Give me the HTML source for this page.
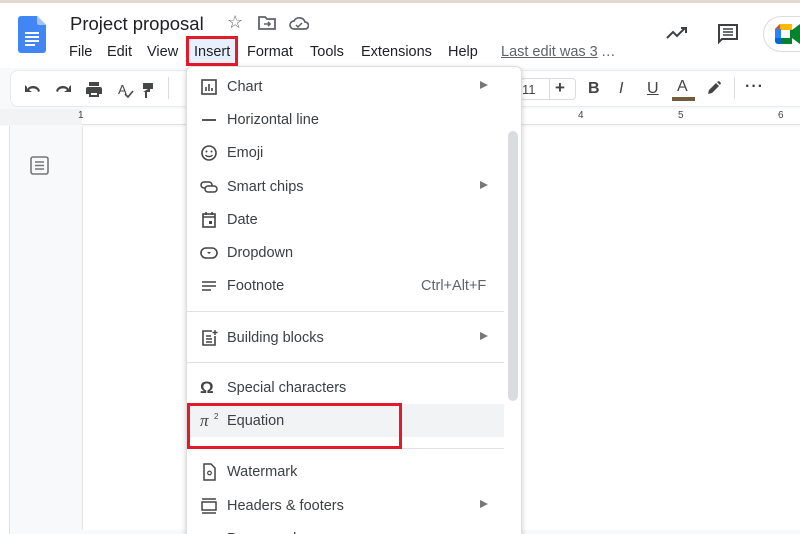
<!DOCTYPE html>
<html><head><meta charset="utf-8"><style>
*{margin:0;padding:0;box-sizing:border-box}
html,body{width:800px;height:534px;overflow:hidden}
body{background:#f8f9fa;font-family:"Liberation Sans",Arial,sans-serif;position:relative;color:#3c4043}
.a{position:absolute}
.mi{position:absolute;left:187px;width:317px;height:33px;font-size:14.5px;color:#3c4043}
.mi .t{position:absolute;left:40px;top:9px}
.mi .ic{position:absolute;left:13px;top:8px;width:18px;height:18px}
.mi .ar{position:absolute;left:293px;top:11px;width:0;height:0;border-left:8px solid #777;border-top:4px solid transparent;border-bottom:4px solid transparent}
.sep{position:absolute;left:187px;width:317px;height:1px;background:#e0e0e0}
</style></head><body>
<div class="a" style="left:0;top:0;width:800px;height:68px;background:#fff"></div>
<div class="a" style="left:0;top:0;width:800px;height:3px;background:#e6d6d2"></div>
<svg class="a" style="left:18px;top:16px" width="28" height="37" viewBox="0 0 28 37"><path d="M3 0h16l9 9v25a3 3 0 0 1-3 3H3a3 3 0 0 1-3-3V3a3 3 0 0 1 3-3z" fill="#4285f4"/><path d="M19 0l9 9h-7a2 2 0 0 1-2-2z" fill="#a1c2fa"/><rect x="7" y="16" width="14" height="2" fill="#fff"/><rect x="7" y="20" width="14" height="2" fill="#fff"/><rect x="7" y="24" width="14" height="2" fill="#fff"/><rect x="7" y="28" width="10" height="2" fill="#fff"/></svg>
<div class="a" style="left:70px;top:13px;font-size:18.5px;color:#202124">Project proposal</div>
<div class="a" style="left:227px;top:12px;font-size:18px;color:#5f6368">☆</div>
<svg class="a" style="left:258px;top:15px" width="18" height="15" viewBox="0 0 18 15"><path d="M1 2h6l2 2h8v10H1z" fill="none" stroke="#5f6368" stroke-width="1.8"/><path d="M6 9h6M10 7l2 2-2 2" fill="none" stroke="#5f6368" stroke-width="1.6"/></svg>
<svg class="a" style="left:289px;top:16px" width="20" height="14" viewBox="0 0 20 14"><path d="M5 13a4 4 0 0 1 0-8 6 6 0 0 1 11 1 3.5 3.5 0 0 1 0 7z" fill="none" stroke="#5f6368" stroke-width="1.7"/><path d="M7 9l2 2 4-4" fill="none" stroke="#5f6368" stroke-width="1.5"/></svg>
<div class="a" style="top:44px;left:69px;font-size:14.5px;color:#202124">File</div>
<div class="a" style="top:44px;left:107px;font-size:14.5px;color:#202124">Edit</div>
<div class="a" style="top:44px;left:147px;font-size:14.5px;color:#202124">View</div>
<div class="a" style="top:38px;left:188px;width:49px;height:27px;background:#e8f0fe"></div>
<div class="a" style="top:44px;left:194px;font-size:14.5px;color:#202124">Insert</div>
<div class="a" style="top:36px;left:186px;width:52px;height:30px;border:3px solid #e21b2b"></div>
<div class="a" style="top:44px;left:247px;font-size:14.5px;color:#202124">Format</div>
<div class="a" style="top:44px;left:310px;font-size:14.5px;color:#202124">Tools</div>
<div class="a" style="top:44px;left:361px;font-size:14.5px;color:#202124">Extensions</div>
<div class="a" style="top:44px;left:448px;font-size:14.5px;color:#202124">Help</div>
<div class="a" style="top:44px;left:501px;font-size:14.5px;color:#5f6368;text-decoration:underline">Last edit was 3 </div><div class="a" style="top:44px;left:601px;font-size:14.5px;color:#5f6368">…</div>
<svg class="a" style="left:666px;top:26px" width="22" height="14" viewBox="0 0 22 14"><path d="M1 12l6-6 4 4 8-8M15 2h5v5" fill="none" stroke="#3c4043" stroke-width="2"/></svg>
<svg class="a" style="left:717px;top:23px" width="22" height="22" viewBox="0 0 22 22"><path d="M2 2h18v14H5l-3 3z" fill="none" stroke="#3c4043" stroke-width="2"/><path d="M6 6h10M6 9h10M6 12h10" stroke="#3c4043" stroke-width="1.6"/></svg>
<div class="a" style="left:763px;top:16px;width:60px;height:36px;border:1px solid #dadce0;border-radius:18px;background:#fff"></div>
<svg class="a" style="left:775px;top:24px" width="25" height="20" viewBox="0 0 25 20"><path d="M5 0h12v6l8-6v20l-8-6v6H5l-5-5V5z" fill="#00832d"/><path d="M5 0h12v6H6v8H0V5z" fill="#ffba00"/><path d="M0 5h6v10H0z" fill="#2684fc"/><path d="M0 14h6v6H3a3 3 0 0 1-3-3z" fill="#0066da"/><path d="M5 0L0 5h5z" fill="#ea4335"/><path d="M6 6h9v8H6z" fill="#fff"/></svg>
<div class="a" style="left:10px;top:70px;width:800px;height:37px;background:#fff;border:1px solid #e8eaed;border-radius:8px"></div>
<svg class="a" style="left:24px;top:82px" width="130" height="16" viewBox="0 0 130 16" fill="#444746"><path d="M3 7a7 6 0 0 1 13 2l-2 1a5 4 0 0 0-9-2l3 2H1V3l2 2z"/><path d="M45 7a7 6 0 0 0-13 2l2 1a5 4 0 0 1 9-2l-3 2h7V3l-2 2z"/><path d="M62 5h14a2 2 0 0 1 2 2v5h-3v3H65v-3h-3v-5a2 2 0 0 1 2-2zM65 0h10v4H65zM67 11v2h6v-2z"/><text x="94" y="12" font-size="13" font-family="Liberation Sans">A</text><path d="M101 12l3 3 5-6" fill="none" stroke="#444746" stroke-width="1.6"/><path d="M119 1h10v6h-10zM124 7h2v3h-3v6h-2v-6h-2z"/></svg>
<div class="a" style="left:168px;top:77px;width:1px;height:22px;background:#dadce0"></div>
<div class="a" style="left:520px;top:78px;width:56px;height:22px;border:1px solid #dadce0;border-radius:4px;background:#fff"></div>
<div class="a" style="left:549px;top:78px;width:1px;height:22px;background:#dadce0"></div>
<div class="a" style="left:522px;top:82px;font-size:13px;color:#444">11</div>
<div class="a" style="left:555px;top:78px;font-size:17px;font-weight:bold;color:#444">+</div>
<div class="a" style="left:588px;top:80px;font-size:16px;font-weight:bold;color:#444">B</div>
<div class="a" style="left:619px;top:80px;font-size:16px;font-style:italic;color:#444">I</div>
<div class="a" style="left:647px;top:80px;font-size:16px;text-decoration:underline;color:#444">U</div>
<div class="a" style="left:677px;top:78px;font-size:16px;color:#444">A</div>
<div class="a" style="left:672px;top:97px;width:23px;height:4px;background:#735c3c"></div>
<svg class="a" style="left:706px;top:80px" width="16" height="16" viewBox="0 0 16 16"><path d="M2 14l1-4 7-7 3 3-7 7zM11 2l2-1 2 2-1 2z" fill="#444"/></svg>
<div class="a" style="left:734px;top:77px;width:1px;height:22px;background:#dadce0"></div>
<div class="a" style="left:745px;top:78px;font-size:16px;font-weight:bold;color:#444;letter-spacing:1px">···</div>
<div class="a" style="left:0;top:109px;width:800px;height:16px;background:#f1f3f4"></div>
<div class="a" style="left:82px;top:109px;width:718px;height:16px;background:#fff;border-bottom:1px solid #e0e0e0"></div>
<div class="a" style="left:78px;top:110px;font-size:10px;color:#444">1</div>
<div class="a" style="left:578px;top:110px;font-size:10px;color:#444">4</div>
<div class="a" style="left:678px;top:110px;font-size:10px;color:#444">5</div>
<div class="a" style="left:778px;top:110px;font-size:10px;color:#444">6</div>
<div class="a" style="left:0;top:126px;width:10px;height:408px;background:#fff;border-right:1px solid #e0e0e0"></div>
<div class="a" style="left:82px;top:127px;width:718px;height:403px;background:#fff;border-left:1px solid #e4e4e4"></div>
<svg class="a" style="left:30px;top:156px" width="19" height="19" viewBox="0 0 19 19"><rect x="1" y="1" width="17" height="17" rx="2" fill="none" stroke="#777" stroke-width="1.6"/><path d="M5 6h9M5 9.5h9M5 13h9" stroke="#777" stroke-width="1.4"/></svg>
<div class="a" style="left:186px;top:66px;width:336px;height:480px;background:#fff;border:1px solid #ddd;border-radius:6px;box-shadow:0 2px 6px rgba(0,0,0,.2)"></div>
<div class="a" style="left:508px;top:131px;width:10px;height:270px;background:#dadce0;border-radius:5px"></div>
<div class="mi" style="top:70px"><svg class="ic" viewBox="0 0 18 18"><rect x="2" y="2" width="14" height="14" fill="none" stroke="#444" stroke-width="1.6"/><path d="M6 13V9M9 13V6M12 13v-3" stroke="#444" stroke-width="1.6"/></svg><span class="t">Chart</span><i class="ar"></i></div>
<div class="mi" style="top:103px"><svg class="ic" viewBox="0 0 18 18"><path d="M2 9h14" stroke="#444" stroke-width="1.8"/></svg><span class="t">Horizontal line</span></div>
<div class="mi" style="top:136px"><svg class="ic" viewBox="0 0 18 18"><circle cx="9" cy="9" r="7" fill="none" stroke="#444" stroke-width="1.6"/><circle cx="6.5" cy="7.5" r="1" fill="#444"/><circle cx="11.5" cy="7.5" r="1" fill="#444"/><path d="M5.5 11a4 3 0 0 0 7 0" fill="none" stroke="#444" stroke-width="1.4"/></svg><span class="t">Emoji</span></div>
<div class="mi" style="top:170px"><svg class="ic" viewBox="0 0 18 18"><rect x="1" y="4" width="11" height="6" rx="3" fill="none" stroke="#444" stroke-width="1.5"/><rect x="5" y="8" width="12" height="6" rx="3" fill="#fff" stroke="#444" stroke-width="1.5"/></svg><span class="t">Smart chips</span><i class="ar"></i></div>
<div class="mi" style="top:203px"><svg class="ic" viewBox="0 0 18 18"><rect x="3" y="3" width="12" height="13" fill="none" stroke="#444" stroke-width="1.6"/><path d="M3 6h12M6 1v3M12 1v3" stroke="#444" stroke-width="1.6"/><rect x="9" y="10" width="3" height="3" fill="#444"/></svg><span class="t">Date</span></div>
<div class="mi" style="top:236px"><svg class="ic" viewBox="0 0 18 18"><rect x="1" y="4" width="16" height="10" rx="5" fill="none" stroke="#444" stroke-width="1.6"/><path d="M7 8h4l-2 2z" fill="#444"/></svg><span class="t">Dropdown</span></div>
<div class="mi" style="top:269px"><svg class="ic" viewBox="0 0 18 18"><path d="M2 5h14M2 9h14M2 13h9" stroke="#444" stroke-width="1.6"/></svg><span class="t">Footnote</span><span style="position:absolute;left:234px;top:9px;color:#5f6368">Ctrl+Alt+F</span></div>
<div class="sep" style="top:311px"></div>
<div class="mi" style="top:321px"><svg class="ic" viewBox="0 0 18 18"><path d="M12 2H3v14h12V7" fill="none" stroke="#444" stroke-width="1.6"/><path d="M6 7h5M6 10h6M6 13h6M15 1v5M12.5 3.5h5" stroke="#444" stroke-width="1.4"/></svg><span class="t">Building blocks</span><i class="ar"></i></div>
<div class="sep" style="top:362px"></div>
<div class="mi" style="top:371px"><span class="ic" style="font-size:17px;font-weight:bold;top:7px;color:#444">Ω</span><span class="t">Special characters</span></div>
<div class="mi" style="top:404px;background:#f1f3f4"><span class="ic" style="font-size:17px;top:7px;color:#444;font-family:'Liberation Serif',serif;font-style:italic">π</span><span style="position:absolute;left:27px;top:8px;font-size:8px;color:#444">2</span><span class="t">Equation</span></div>
<div class="a" style="left:187px;top:403px;width:215px;height:46px;border:3px solid #e21b2b"></div>
<div class="sep" style="top:448px;left:402px;width:102px"></div>
<div class="mi" style="top:455px"><svg class="ic" viewBox="0 0 18 18"><path d="M4 1h7l4 4v12H4z" fill="none" stroke="#444" stroke-width="1.5"/><circle cx="9.5" cy="10" r="1.8" fill="none" stroke="#444" stroke-width="1.2"/></svg><span class="t">Watermark</span></div>
<div class="mi" style="top:489px"><svg class="ic" viewBox="0 0 18 18"><path d="M2 2h14M2 16h14" stroke="#444" stroke-width="1.5"/><rect x="2" y="5" width="14" height="8" fill="none" stroke="#444" stroke-width="1.5"/></svg><span class="t">Headers &amp; footers</span><i class="ar"></i></div>
<div class="mi" style="top:522px"><span class="t">Page numbers</span></div>
</body></html>
